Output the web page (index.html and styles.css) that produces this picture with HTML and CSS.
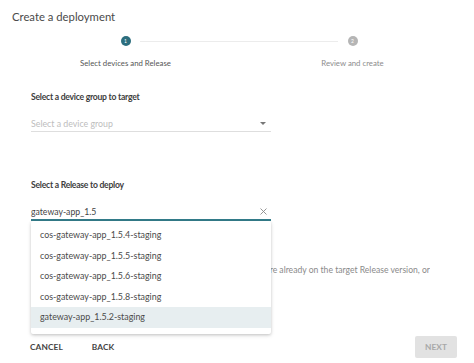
FILE: index.html
```html
<!DOCTYPE html>
<html>
<head>
<meta charset="utf-8">
<link rel="stylesheet" href="styles.css">
</head>
<body>
<div class="page">
  <h1 class="title">Create a deployment</h1>
  <div class="stepper">
    <div class="connector"></div>
    <div class="step active">
      <span class="dot">1</span>
      <span class="step-label">Select devices and Release</span>
    </div>
    <div class="step">
      <span class="dot">2</span>
      <span class="step-label">Review and create</span>
    </div>
  </div>

  <div class="form">
    <div class="label label-first">Select a device group to target</div>
    <div class="field">
      <span class="placeholder">Select a device group</span>
      <span class="arrow"></span>
    </div>

    <div class="label label-second">Select a Release to deploy</div>
    <div class="release">
      <div class="field focused">
        <span class="value">gateway-app_1.5</span>
        <svg class="clear" width="7" height="7" viewBox="0 0 7 7"><path d="M0.5 0.5L6.5 6.5M6.5 0.5L0.5 6.5" stroke="#8a8a8a" stroke-width="0.9" fill="none"/></svg>
      </div>
      <ul class="menu">
        <li>cos-gateway-app_1.5.4-staging</li>
        <li>cos-gateway-app_1.5.5-staging</li>
        <li>cos-gateway-app_1.5.6-staging</li>
        <li>cos-gateway-app_1.5.8-staging</li>
        <li class="selected">gateway-app_1.5.2-staging</li>
      </ul>
    </div>
    <p class="note">Devices in the selected group that are already on the target Release version, or</p>
  </div>

  <div class="actions">
    <div class="left-actions">
      <button class="text-btn">CANCEL</button>
      <button class="text-btn">BACK</button>
    </div>
    <button class="next-btn">NEXT</button>
  </div>
</div>
</body>
</html>
```

FILE: styles.css
```css
* { box-sizing: border-box; }
html, body { margin: 0; padding: 0; background: #fff; }
body {
  font-family: Lato, "Open Sans", "Liberation Sans", sans-serif;
  color: #444;
  width: 474px;
  height: 363px;
  overflow: hidden;
}
.page { padding: 0 8px 0 12px; }
.title {
  margin: 10px 0 0;
  font-size: 11.3px;
  font-weight: 400;
  line-height: 14px;
  color: #4a4a4a;
}
.stepper {
  position: relative;
  display: grid;
  grid-template-columns: 1fr 1fr;
  margin-top: 12px;
}
.connector {
  position: absolute;
  left: 128px;
  right: 128px;
  top: 5px;
  height: 1px;
  background: #ececec;
}
.step {
  display: flex;
  flex-direction: column;
  align-items: center;
}
.dot {
  width: 10px;
  height: 10px;
  border-radius: 50%;
  background: #b5b5b5;
  color: #fff;
  font-size: 5px;
  line-height: 10px;
  text-align: center;
}
.step.active .dot { background: #2c6e7e; }
.step-label {
  margin-top: 12px;
  font-size: 7.8px;
  line-height: 10px;
  color: #8c8c8c;
}
.step.active .step-label { color: #555; }
.form {
  margin-left: 19px;
  width: 240px;
}
.label {
  font-size: 8.6px;
  font-weight: 700;
  line-height: 12px;
  letter-spacing: -0.25px;
  color: #3d3d3d;
}
.label-first { margin-top: 23px; }
.label-second { margin-top: 47px; }
.field {
  display: flex;
  align-items: center;
  justify-content: space-between;
  height: 17px;
  margin-top: 12px;
  border-bottom: 1px solid #dedede;
  font-size: 8.8px;
}
.placeholder { color: #bdbdbd; }
.arrow {
  width: 0;
  height: 0;
  margin-right: 5px;
  border-left: 3px solid transparent;
  border-right: 3px solid transparent;
  border-top: 3px solid #777;
}
.release { position: relative; }
.field.focused {
  height: 17px;
  margin-top: 13px;
  border-bottom: 2px solid #347d8b;
  font-size: 8.7px;
}
.value { color: #444; }
.clear { margin-right: 4px; }
.menu {
  position: absolute;
  left: 0;
  top: 17px;
  width: 240px;
  margin: 0;
  padding: 4px 0 6px;
  list-style: none;
  background: #fff;
  border-radius: 2px;
  box-shadow: 0 1px 3px rgba(0,0,0,0.18), 0 2px 5px rgba(0,0,0,0.08);
  z-index: 2;
}
.menu li {
  height: 20.5px;
  line-height: 20.5px;
  padding-left: 9px;
  font-size: 8.9px;
  color: #4a4a4a;
}
.menu li.selected { background: #e7eef0; }
.note {
  margin: 43px 0 0;
  width: 399px;
  font-size: 8.6px;
  line-height: 12px;
  color: #8a8a8a;
  white-space: nowrap;
  overflow: hidden;
  text-align: right;
}
.actions {
  display: flex;
  justify-content: space-between;
  align-items: center;
  margin: 60px 9px 0 18px;
}
.left-actions { display: flex; gap: 29px; }
.text-btn, .next-btn {
  font-family: inherit;
  border: none;
  background: none;
  padding: 0;
  font-size: 8.3px;
  font-weight: 700;
  color: #444;
  letter-spacing: 0.1px;
  cursor: pointer;
}
.next-btn {
  width: 42px;
  height: 22px;
  background: #e2e2e2;
  color: #a8a8a8;
  border-radius: 2px;
}
```
